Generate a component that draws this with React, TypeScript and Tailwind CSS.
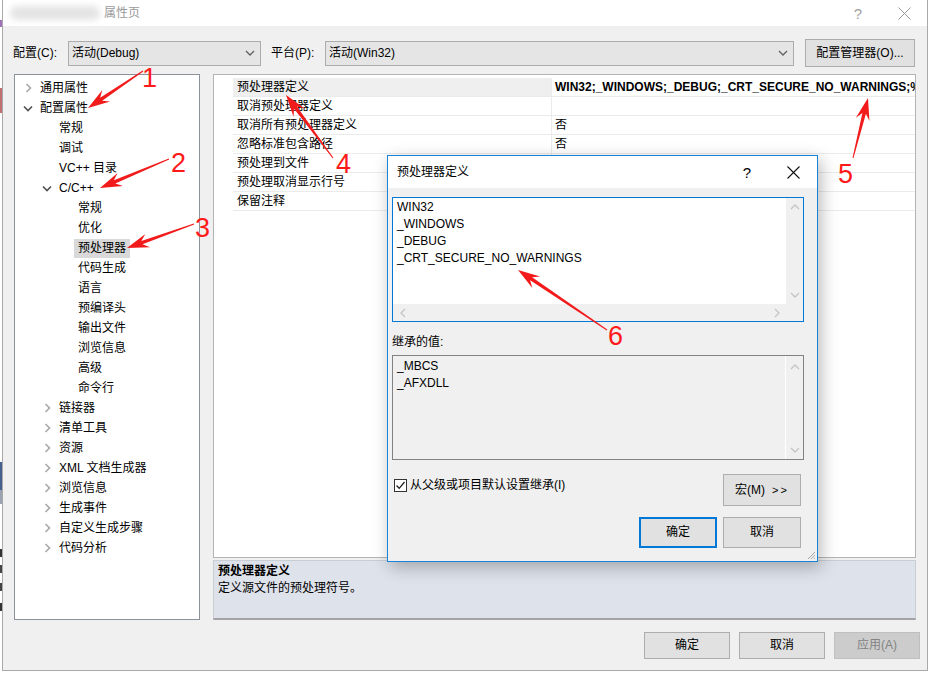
import React from "react";

const F = "font-['Liberation_Sans','Noto_Sans_CJK_SC',sans-serif]";

type Node = { t: string; l: number; c?: "open" | "closed"; sel?: boolean };

const tree: Node[] = [
  { t: "通用属性", l: 0, c: "closed" },
  { t: "配置属性", l: 0, c: "open" },
  { t: "常规", l: 1 },
  { t: "调试", l: 1 },
  { t: "VC++ 目录", l: 1 },
  { t: "C/C++", l: 1, c: "open" },
  { t: "常规", l: 2 },
  { t: "优化", l: 2 },
  { t: "预处理器", l: 2, sel: true },
  { t: "代码生成", l: 2 },
  { t: "语言", l: 2 },
  { t: "预编译头", l: 2 },
  { t: "输出文件", l: 2 },
  { t: "浏览信息", l: 2 },
  { t: "高级", l: 2 },
  { t: "命令行", l: 2 },
  { t: "链接器", l: 1, c: "closed" },
  { t: "清单工具", l: 1, c: "closed" },
  { t: "资源", l: 1, c: "closed" },
  { t: "XML 文档生成器", l: 1, c: "closed" },
  { t: "浏览信息", l: 1, c: "closed" },
  { t: "生成事件", l: 1, c: "closed" },
  { t: "自定义生成步骤", l: 1, c: "closed" },
  { t: "代码分析", l: 1, c: "closed" },
];

const pads = ["pl-[7px]", "pl-[26px]", "pl-[45px]"];

const props: { k: string; v: string; bold?: boolean; sel?: boolean }[] = [
  { k: "预处理器定义", v: "WIN32;_WINDOWS;_DEBUG;_CRT_SECURE_NO_WARNINGS;%(PreprocessorDefinitions)", bold: true, sel: true },
  { k: "取消预处理器定义", v: "" },
  { k: "取消所有预处理器定义", v: "否" },
  { k: "忽略标准包含路径", v: "否" },
  { k: "预处理到文件", v: "否" },
  { k: "预处理取消显示行号", v: "否" },
  { k: "保留注释", v: "否" },
];

function ChevClosed() {
  return (
    <svg width="7" height="10" viewBox="0 0 7 10" className="ml-[3px]">
      <path d="M1.5 1 L5.5 5 L1.5 9" stroke="#a8a8a8" strokeWidth="1.6" fill="none" />
    </svg>
  );
}
function ChevOpen() {
  return (
    <svg width="10" height="7" viewBox="0 0 10 7" className="ml-[1px]">
      <path d="M1 1.5 L5 5.5 L9 1.5" stroke="#505050" strokeWidth="1.6" fill="none" />
    </svg>
  );
}

function SmallChev({ dir, color = "#c4c4c4" }: { dir: "up" | "down" | "left" | "right"; color?: string }) {
  const d =
    dir === "up"
      ? "M1 6 L5 2 L9 6"
      : dir === "down"
      ? "M1 2 L5 6 L9 2"
      : dir === "left"
      ? "M6 1 L2 5 L6 9"
      : "M2 1 L6 5 L2 9";
  const w = dir === "up" || dir === "down" ? 10 : 8;
  const h = dir === "up" || dir === "down" ? 8 : 10;
  return (
    <svg width={w} height={h} viewBox={`0 0 ${w} ${h}`}>
      <path d={d} stroke={color} strokeWidth="1.3" fill="none" />
    </svg>
  );
}

function Arrow({ x1, y1, x2, y2 }: { x1: number; y1: number; x2: number; y2: number }) {
  const dx = x2 - x1;
  const dy = y2 - y1;
  const len = Math.hypot(dx, dy);
  const ux = dx / len;
  const uy = dy / len;
  const nx = -uy;
  const ny = ux;
  const headLen = 22;
  const headHalf = 7;
  const neckHalf = 1.8;
  const tailHalf = 0.5;
  const bx = x2 - ux * headLen;
  const by = y2 - uy * headLen;
  const kx = x2 - ux * headLen * 0.72;
  const ky = y2 - uy * headLen * 0.72;
  const pts = [
    [x1 + nx * tailHalf, y1 + ny * tailHalf],
    [kx + nx * neckHalf, ky + ny * neckHalf],
    [bx + nx * headHalf, by + ny * headHalf],
    [x2, y2],
    [bx - nx * headHalf, by - ny * headHalf],
    [kx - nx * neckHalf, ky - ny * neckHalf],
    [x1 - nx * tailHalf, y1 - ny * tailHalf],
  ];
  return <polygon points={pts.map((p) => p.join(",")).join(" ")} fill="#f21b1b" />;
}

function Btn({ children, className = "" }: { children: React.ReactNode; className?: string }) {
  return (
    <div className={`flex items-center justify-center bg-[#e1e1e1] border border-[#adadad] ${className}`}>{children}</div>
  );
}

export default function App() {
  return (
    <div className={`relative w-[930px] h-[673px] overflow-hidden bg-white flex ${F} text-[12px] text-black leading-[17px]`}>
      {/* outside strip */}
      <div className="w-[2px] h-full flex flex-col shrink-0">
        <div className="h-[20px]" />
        <div className="h-[7px] bg-[#a070b8]" />
        <div className="h-[61px]" />
        <div className="h-[25px] bg-[#c07070]" />
        <div className="h-[349px]" />
        <div className="h-[28px] bg-[#46618f]" />
        <div className="h-[14px] bg-[#9aa3b0]" />
        <div className="h-[45px]" />
        <div className="h-[8px] bg-[#333333]" />
        <div className="h-[8px]" />
        <div className="h-[8px] bg-[#444444]" />
        <div className="h-[10px]" />
        <div className="h-[8px] bg-[#444444]" />
        <div className="h-[12px]" />
        <div className="h-[8px] bg-[#333333]" />
      </div>

      {/* main window */}
      <div className="w-[926px] h-[671px] flex flex-col border-l border-r border-b border-[#a9a9a9] shrink-0">
        {/* title bar */}
        <div className="h-[26px] bg-white flex items-center shrink-0">
          <div className="ml-[7px] w-[90px] h-[14px] bg-[#e4e4e4] blur-[3px] rounded-full" />
          <span className="ml-[4px] text-[#9a9a9a]">属性页</span>
          <span className="ml-auto w-[46px] text-center text-[15px] text-[#a0a0a0]">?</span>
          <span className="w-[46px] flex justify-center">
            <svg width="13" height="13" viewBox="0 0 13 13">
              <path d="M0.5 0.5 L12.5 12.5 M12.5 0.5 L0.5 12.5" stroke="#9a9a9a" strokeWidth="1" />
            </svg>
          </span>
        </div>

        {/* body */}
        <div className="flex-1 bg-[#f0f0f0] flex flex-col pt-[13px] pl-[11px]">
          {/* config row */}
          <div className="h-[28px] flex items-center shrink-0">
            <span className="w-[54px] -ml-[1px] mr-[1px]">配置(C):</span>
            <div className="w-[193px] h-[25px] bg-[#e5e5e5] border border-[#acacac] flex items-center pl-[3px] pr-[5px]">
              <span>活动(Debug)</span>
              <span className="ml-auto">
                <SmallChev dir="down" color="#606060" />
              </span>
            </div>
            <span className="ml-[10px] w-[54px]">平台(P):</span>
            <div className="w-[469px] h-[25px] bg-[#e5e5e5] border border-[#acacac] flex items-center pl-[3px] pr-[5px]">
              <span>活动(Win32)</span>
              <span className="ml-auto">
                <SmallChev dir="down" color="#606060" />
              </span>
            </div>
            <Btn className="ml-[11px] w-[110px] h-[28px]">配置管理器(O)...</Btn>
          </div>

          {/* main area */}
          <div className="mt-[7px] h-[546px] flex shrink-0">
            {/* tree */}
            <div className="w-[186px] h-full bg-white border border-[#8b929b] pt-[3px] flex flex-col">
              {tree.map((n, i) => (
                <div key={i} className={`h-[20px] flex items-center ${pads[n.l]}`}>
                  <div className="w-[18px] flex items-center">
                    {n.c === "closed" && <ChevClosed />}
                    {n.c === "open" && <ChevOpen />}
                  </div>
                  <span className={n.sel ? "bg-[#d9d9d9] px-[4px] -ml-[4px] leading-[19px]" : ""}>{n.t}</span>
                </div>
              ))}
            </div>

            {/* right column */}
            <div className="ml-[13px] w-[703px] h-full flex flex-col">
              <div className="h-[484px] bg-white border border-[#b4b4b4] pt-[3px] pl-[19px] flex flex-col">
                {props.map((p, i) => (
                  <div key={i} className="h-[19px] flex border-b border-[#ebebeb]">
                    <div className={`w-[319px] pl-[4px] flex items-center border-r border-[#ebebeb] ${p.sel ? "bg-[#efefef]" : ""}`}>
                      {p.k}
                    </div>
                    <div className={`flex-1 pl-[3px] flex items-center overflow-hidden whitespace-nowrap ${p.bold ? "font-bold" : ""}`}>
                      {p.v}
                    </div>
                  </div>
                ))}
              </div>
              <div className="mt-[2px] h-[60px] bg-[#dee2ea] border border-[#c9cdd4] border-b-2 border-b-[#a3a3a3] pl-[4px] pt-[2px]">
                <div className="font-bold">预处理器定义</div>
                <div>定义源文件的预处理符号。</div>
              </div>
            </div>
          </div>

          {/* bottom buttons */}
          <div className="mt-[12px] flex justify-end gap-[9px] pr-[7px]">
            <Btn className="w-[86px] h-[27px]">确定</Btn>
            <Btn className="w-[86px] h-[27px]">取消</Btn>
            <div className="w-[86px] h-[27px] flex items-center justify-center bg-[#cccccc] border border-[#bfbfbf] text-[#838383]">
              应用(A)
            </div>
          </div>
        </div>
      </div>

      {/* modal dialog */}
      <div className="absolute left-[387px] top-[155px] w-[431px] h-[407px] border border-[#1883d7] bg-[#f0f0f0] shadow-[3px_5px_16px_rgba(0,0,0,0.28)] flex flex-col">
        <div className="h-[32px] bg-white flex items-center shrink-0">
          <span className="ml-[9px]">预处理器定义</span>
          <span className="ml-auto w-[46px] text-center text-[15px]">?</span>
          <span className="w-[46px] mr-[1px] flex justify-center">
            <svg width="13" height="13" viewBox="0 0 13 13">
              <path d="M0.5 0.5 L12.5 12.5 M12.5 0.5 L0.5 12.5" stroke="#111" strokeWidth="1.1" />
            </svg>
          </span>
        </div>
        <div className="px-[4px] flex flex-col">
          {/* edit box */}
          <div className="mt-[9px] w-[412px] h-[125px] border border-[#0078d7] bg-white flex flex-col">
            <div className="flex h-[106px]">
              <div className="flex-1 pl-[4px] pt-[1px]">
                <div>WIN32</div>
                <div>_WINDOWS</div>
                <div>_DEBUG</div>
                <div>_CRT_SECURE_NO_WARNINGS</div>
              </div>
              <div className="w-[17px] bg-[#f0f0f0] flex flex-col items-center justify-between pt-[5px] pb-[5px]">
                <SmallChev dir="up" />
                <SmallChev dir="down" />
              </div>
            </div>
            <div className="flex h-[17px]">
              <div className="flex-1 bg-[#f0f0f0] flex items-center justify-between pl-[6px] pr-[5px]">
                <SmallChev dir="left" />
                <SmallChev dir="right" />
              </div>
              <div className="w-[17px] bg-[#f0f0f0]" />
            </div>
          </div>

          <div className="mt-[12px] leading-[16px]">继承的值:</div>

          {/* inherited box */}
          <div className="mt-[5px] w-[412px] h-[105px] border border-[#828282] flex">
            <div className="flex-1 pl-[4px] pt-[2px]">
              <div>_MBCS</div>
              <div>_AFXDLL</div>
            </div>
            <div className="w-[18px] border-l border-white flex flex-col items-center justify-between pt-[7px] pb-[5px]">
              <SmallChev dir="up" />
              <SmallChev dir="down" />
            </div>
          </div>

          {/* checkbox row */}
          <div className="mt-[14px] h-[32px] flex">
            <div className="ml-[2px] pt-[5px] flex items-start">
              <div className="w-[13px] h-[13px] border border-[#333333] bg-white flex items-center justify-center">
                <svg width="11" height="11" viewBox="0 0 11 11">
                  <path d="M1.5 5.5 L4.2 8.3 L9.5 2" stroke="#222" strokeWidth="1.3" fill="none" />
                </svg>
              </div>
              <span className="ml-[3px] -mt-[2px]">从父级或项目默认设置继承(I)</span>
            </div>
            <Btn className="ml-auto mr-[12px] w-[78px] h-[32px]">
              <span>宏(M)</span>
              <span className="ml-[7px] text-[11px] tracking-[2px]">&gt;&gt;</span>
            </Btn>
          </div>

          {/* ok / cancel */}
          <div className="mt-[11px] flex justify-end gap-[6px] mr-[12px]">
            <div className="w-[78px] h-[31px] flex items-center justify-center bg-[#e1e1e1] border-2 border-[#0078d7]">确定</div>
            <Btn className="w-[78px] h-[31px]">取消</Btn>
          </div>
        </div>
        {/* resize grip */}
        <svg className="absolute right-[1px] bottom-[1px]" width="10" height="10" viewBox="0 0 10 10">
          <path d="M9 2 L2 9 M9 5 L5 9 M9 8 L8 9" stroke="#a8a8a8" strokeWidth="1" />
        </svg>
      </div>

      {/* annotations */}
      <svg className="absolute left-0 top-0 pointer-events-none" width="930" height="673" viewBox="0 0 930 673">
        <Arrow x1={143} y1={71} x2={88} y2={108} />
        <Arrow x1={169} y1={159} x2={100} y2={188} />
        <Arrow x1={194} y1={224} x2={127} y2={248} />
        <Arrow x1={333} y1={158} x2={286} y2={95} />
        <Arrow x1={853} y1={158} x2={868} y2={98} />
        <Arrow x1={607} y1={330} x2={518} y2={270} />
        <g fill="#ff1a1a" fontFamily="'Liberation Sans', Arial, sans-serif" fontSize="27">
          <text x="142" y="87">1</text>
          <text x="171" y="172">2</text>
          <text x="195" y="237">3</text>
          <text x="336" y="173">4</text>
          <text x="838" y="183">5</text>
          <text x="608" y="345">6</text>
        </g>
      </svg>
    </div>
  );
}
